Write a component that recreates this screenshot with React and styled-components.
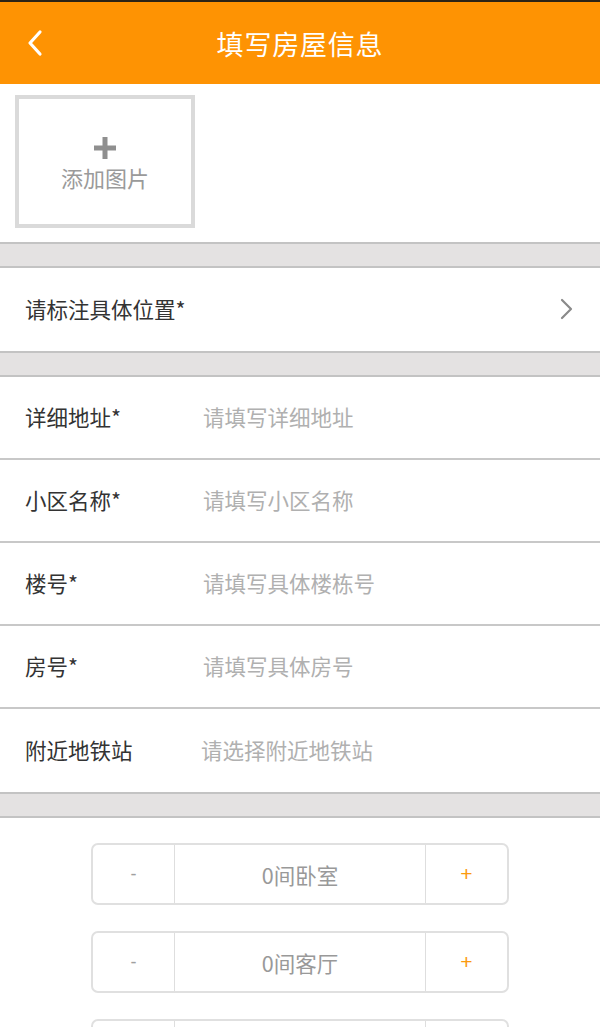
import React from "react";
import styled, { createGlobalStyle } from "styled-components";

const Global = createGlobalStyle`
  html, body { margin: 0; padding: 0; background: #fff; }
  body { font-family: "Noto Sans CJK SC", "Noto Sans", sans-serif; overflow: hidden; }
  * { box-sizing: border-box; }
`;

const Page = styled.div`
  width: 600px;
  height: 1027px;
  overflow: hidden;
  background: #fff;
`;

const Header = styled.header`
  height: 84px;
  border-top: 2px solid #2b2316;
  background: #fe9303;
  display: flex;
  align-items: center;
  justify-content: center;
  position: relative;
`;

const BackButton = styled.button`
  position: absolute;
  left: 20px;
  top: 50%;
  transform: translateY(-50%);
  width: 30px;
  height: 40px;
  border: none;
  background: transparent;
  padding: 0;
  display: flex;
  align-items: center;
  justify-content: center;
`;

const Title = styled.h1`
  margin: 0;
  color: #fff;
  font-size: 27px;
  font-weight: 400;
  letter-spacing: 0.8px;
`;

const PhotoSection = styled.section`
  padding: 11px 15px 14px;
`;

const AddPhoto = styled.div`
  width: 180px;
  height: 133px;
  padding-top: 6px;
  border: 4px solid #dadada;
  display: flex;
  flex-direction: column;
  align-items: center;
  justify-content: center;
  gap: 2px;
  color: #9a9a9a;
  font-size: 22px;
`;

const Band = styled.div`
  height: 26px;
  background: #e4e2e2;
  border-top: 2px solid #c3c3c3;
  border-bottom: 2px solid #c3c3c3;
`;

const Row = styled.div`
  height: 83px;
  display: flex;
  align-items: center;
  padding: 0 25px 2px;
  border-bottom: ${(p) => (p.$last ? "none" : "2px solid #c8c8c8")};
`;

const Label = styled.span`
  flex: ${(p) => (p.$fixed ? "0 0 176px" : "1 1 auto")};
  font-size: 21.5px;
  color: #333;
`;

const Field = styled.input`
  flex: 1 1 auto;
  min-width: 0;
  border: none;
  outline: none;
  padding: 0 0 0 ${(p) => p.$shift || 0}px;
  background: transparent;
  font-family: inherit;
  font-size: 21.5px;
  color: #333;
  &::placeholder { color: #b0b0b0; }
`;

const Steppers = styled.section`
  padding: 25px 0 0;
  display: flex;
  flex-direction: column;
  align-items: center;
  gap: 26px;
`;

const Stepper = styled.div`
  width: 418px;
  height: 62px;
  border: 2px solid #e0e0e0;
  border-radius: 7px;
  display: grid;
  grid-template-columns: 82px 1fr 82px;
  flex-shrink: 0;
`;

const StepButton = styled.button`
  border: none;
  background: transparent;
  font-family: "Liberation Sans", sans-serif;
  font-size: ${(p) => (p.$plus ? "21px" : "18px")};
  color: ${(p) => (p.$plus ? "#fb9a0f" : "#a0a0a0")};
  padding: 0;
  border-right: ${(p) => (p.$plus ? "none" : "1px solid #dedede")};
  border-left: ${(p) => (p.$plus ? "1px solid #dedede" : "none")};
`;

const StepValue = styled.div`
  display: flex;
  align-items: center;
  justify-content: center;
  font-size: 21.5px;
  color: #999;
`;

const Chevron = () => (
  <svg width="16" height="24" viewBox="0 0 16 24">
    <path d="M3 3 L12 12 L3 21" fill="none" stroke="#8a8a8a" strokeWidth="2.2" strokeLinecap="round" strokeLinejoin="round" />
  </svg>
);

const rows = [
  ["详细地址*", "请填写详细地址", 2],
  ["小区名称*", "请填写小区名称", 2],
  ["楼号*", "请填写具体楼栋号", 2],
  ["房号*", "请填写具体房号", 2],
  ["附近地铁站", "请选择附近地铁站", 0],
];

const steps = ["0间卧室", "0间客厅", "0间卫生间"];

export default function App() {
  return (
    <Page>
      <Global />
      <Header>
        <BackButton aria-label="back">
          <svg width="18" height="28" viewBox="0 0 18 28">
            <path d="M14 3 L4 14 L14 25" fill="none" stroke="#fff" strokeWidth="3.2" strokeLinecap="round" strokeLinejoin="round" />
          </svg>
        </BackButton>
        <Title>填写房屋信息</Title>
      </Header>

      <PhotoSection>
        <AddPhoto>
          <svg width="22" height="22" viewBox="0 0 22 22">
            <rect x="8.5" y="0" width="5" height="22" fill="#8f8f8f" />
            <rect x="0" y="8.5" width="22" height="5" fill="#8f8f8f" />
          </svg>
          <span>添加图片</span>
        </AddPhoto>
      </PhotoSection>

      <Band />
      <Row $last>
        <Label>请标注具体位置*</Label>
        <Chevron />
      </Row>
      <Band />

      {rows.map(([label, ph, shift], i) => (
        <Row key={label} $last={i === rows.length - 1}>
          <Label $fixed>{label}</Label>
          <Field placeholder={ph} readOnly $shift={shift} />
        </Row>
      ))}
      <Band />

      <Steppers>
        {steps.map((s) => (
          <Stepper key={s}>
            <StepButton>-</StepButton>
            <StepValue>{s}</StepValue>
            <StepButton $plus>+</StepButton>
          </Stepper>
        ))}
      </Steppers>
    </Page>
  );
}
